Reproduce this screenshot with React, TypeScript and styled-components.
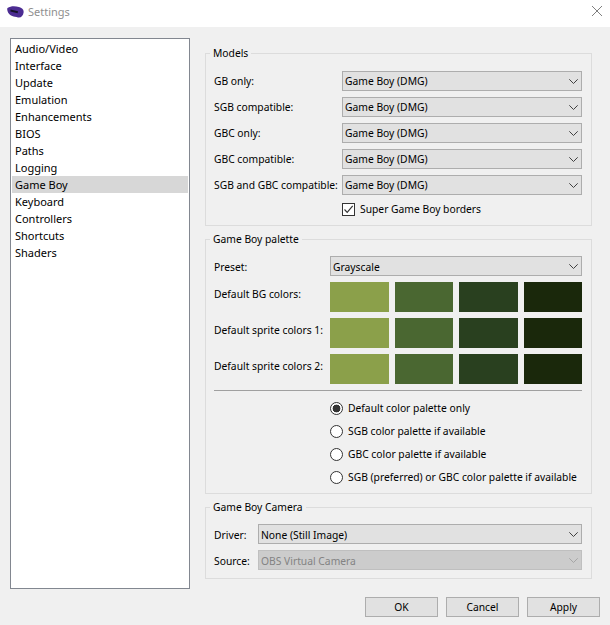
import React from "react";
import styled, { createGlobalStyle } from "styled-components";

const Global = createGlobalStyle`
  html, body { margin: 0; padding: 0; background: #f0f0f0; }
  body { font-family: "Noto Sans", "Open Sans", sans-serif; font-size: 10.3px; color: #000; }
`;

const Window = styled.div`
  width: 610px;
  height: 625px;
  display: flex;
  flex-direction: column;
  overflow: hidden;
  background: #f0f0f0;
`;

const TitleBar = styled.div`
  height: 27px;
  flex: none;
  display: flex;
  align-items: center;
  background: #fff;
  padding: 0 8px 0 7px;
  gap: 4px;
`;

const TitleText = styled.span`
  flex: 1;
  color: #8f8f8f;
  font-size: 11px;
  line-height: 24px;
  align-self: flex-start;
`;

const Body = styled.div`
  flex: none;
  display: flex;
  gap: 15px;
  padding: 11px 18px 0 10px;
`;

const List = styled.ul`
  list-style: none;
  margin: 0;
  box-sizing: border-box;
  width: 180px;
  height: 551px;
  padding: 1px;
  border: 1px solid #828790;
  background: #fff;
  font-size: 11px;
`;

const ListItem = styled.li<{ $selected?: boolean }>`
  height: 17px;
  line-height: 17px;
  padding-left: 3px;
  background: ${(p) => (p.$selected ? "#d7d7d7" : "transparent")};
`;

const Column = styled.div`
  width: 387px;
  padding-top: 8px;
  display: flex;
  flex-direction: column;
  gap: 6px;
`;

const Group = styled.fieldset<{ $top: number; $bottom: number }>`
  margin: 0;
  min-width: 0;
  box-sizing: border-box;
  border: 1px solid #dcdcdc;
  padding: ${(p) => p.$top}px 9px ${(p) => p.$bottom}px 8px;
`;

const GroupTitle = styled.legend`
  margin-left: -4px;
  padding: 0 3px;
  height: 15px;
  line-height: 15px;
`;

const FormGrid = styled.div<{ $label: number }>`
  display: grid;
  grid-template-columns: ${(p) => p.$label}px 1fr;
  row-gap: 6px;
  align-items: center;
`;

const Label = styled.span<{ $low?: boolean }>`
  white-space: nowrap;
  line-height: ${(p) => (p.$low ? 18 : 20)}px;
  padding-top: ${(p) => (p.$low ? 2 : 0)}px;
`;

const SwatchLabel = styled.span`
  align-self: start;
  white-space: nowrap;
  line-height: 20px;
  margin-top: 2px;
`;

const Select = styled.div<{ $disabled?: boolean; $low?: boolean }>`
  box-sizing: border-box;
  height: 20px;
  display: flex;
  align-items: center;
  justify-content: space-between;
  padding: 0 3px 0 2px;
  border: 1px solid ${(p) => (p.$disabled ? "#bfbfbf" : "#adadad")};
  background: ${(p) => (p.$disabled ? "#cccccc" : "#e1e1e1")};
  color: ${(p) => (p.$disabled ? "#838383" : "#000")};
  line-height: 18px;
  > span {
    padding-top: ${(p) => (p.$low ? 2 : 0)}px;
    line-height: ${(p) => (p.$low ? 16 : 18)}px;
  }
`;

const CheckRow = styled.label`
  grid-column: 2;
  height: 16px;
  display: flex;
  align-items: center;
  gap: 5px;
`;

const CheckBox = styled.span`
  width: 13px;
  height: 13px;
  box-sizing: border-box;
  border: 1px solid #333;
  background: #fff;
  display: flex;
`;

const Swatches = styled.div`
  display: grid;
  grid-template-columns: repeat(4, 1fr);
  column-gap: 6px;
`;

const Swatch = styled.div<{ $color: string }>`
  height: 30px;
  background: ${(p) => p.$color};
`;

const Divider = styled.hr`
  margin: 6px 0 0;
  border: 0;
  height: 1px;
  background: #a0a0a0;
`;

const RadioList = styled.div`
  margin: 8px 0 0 116px;
  display: flex;
  flex-direction: column;
  gap: 5px;
`;

const RadioRow = styled.label`
  height: 18px;
  display: flex;
  align-items: center;
  gap: 5px;
  white-space: nowrap;
`;

const RadioDot = styled.span<{ $on?: boolean }>`
  width: 13px;
  height: 13px;
  box-sizing: border-box;
  flex: none;
  border: 1px solid #333;
  border-radius: 50%;
  background: ${(p) => (p.$on ? "radial-gradient(circle, #333 0 3.6px, #fff 4.2px)" : "#fff")};
`;

const ButtonBar = styled.div`
  flex: none;
  display: flex;
  justify-content: flex-end;
  gap: 8px;
  padding: 8px 10px 0 0;
`;

const Button = styled.button`
  width: 73px;
  height: 20px;
  padding: 0;
  box-sizing: border-box;
  border: 1px solid #adadad;
  background: #e1e1e1;
  font: inherit;
  line-height: 18px;
  color: #000;
`;

const Chevron = ({ color = "#404040" }: { color?: string }) => (
  <svg width="9" height="5" viewBox="0 0 9 5" fill="none" stroke={color} strokeWidth="1">
    <path d="M0.3 0.3 L4.5 4.5 L8.7 0.3" />
  </svg>
);

const Combo = ({ text, disabled, low }: { text: string; disabled?: boolean; low?: boolean }) => (
  <Select $disabled={disabled} $low={low}>
    <span>{text}</span>
    <Chevron color={disabled ? "#a5a5a5" : "#404040"} />
  </Select>
);

const AppIcon = () => (
  <svg width="17" height="12" viewBox="0 0 17 12" style={{ flex: "none", marginBottom: 3 }}>
    <path d="M0.5 2 C4 -0.3 8 0 12 1 C15 1.8 17 3.5 16.6 6.5 C16.2 9.8 14 12 11 11.4 C7 10.6 3 10 1.2 6.8 C0.4 5 -0.2 3.2 0.5 2Z" fill="#4c2c92" />
    <path d="M3.5 3.6 L11 5.2 L10.6 7.2 L3.4 5.6Z" fill="#15122a" />
  </svg>
);

const Close = () => (
  <svg width="10" height="10" viewBox="0 0 10 10" stroke="#7f7f7f" strokeWidth="1" style={{ marginTop: -5 }}>
    <path d="M0 0 L10 10 M10 0 L0 10" />
  </svg>
);

const pages = ["Audio/Video", "Interface", "Update", "Emulation", "Enhancements", "BIOS", "Paths", "Logging", "Game Boy", "Keyboard", "Controllers", "Shortcuts", "Shaders"];
const models = ["GB only:", "SGB compatible:", "GBC only:", "GBC compatible:", "SGB and GBC compatible:"];
const palette = ["#8ba04a", "#4a6731", "#29401f", "#1a280b"];
const paletteRows = ["Default BG colors:", "Default sprite colors 1:", "Default sprite colors 2:"];
const radios = ["Default color palette only", "SGB color palette if available", "GBC color palette if available", "SGB (preferred) or GBC color palette if available"];

export default function App() {
  return (
    <Window>
      <Global />
      <TitleBar>
        <AppIcon />
        <TitleText>Settings</TitleText>
        <Close />
      </TitleBar>
      <Body>
        <List>
          {pages.map((p) => (
            <ListItem key={p} $selected={p === "Game Boy"}>{p}</ListItem>
          ))}
        </List>
        <Column>
          <Group $top={10} $bottom={8}>
            <GroupTitle>Models</GroupTitle>
            <FormGrid $label={128}>
              {models.map((m) => (
                <React.Fragment key={m}>
                  <Label>{m}</Label>
                  <Combo text="Game Boy (DMG)" />
                </React.Fragment>
              ))}
              <CheckRow>
                <CheckBox>
                  <svg width="11" height="11" viewBox="0 0 11 11" fill="none" stroke="#333" strokeWidth="1.2">
                    <path d="M1.5 5.5 L4.2 8.3 L9.7 1.8" />
                  </svg>
                </CheckBox>
                Super Game Boy borders
              </CheckRow>
            </FormGrid>
          </Group>
          <Group $top={9} $bottom={7}>
            <GroupTitle>Game Boy palette</GroupTitle>
            <FormGrid $label={116}>
              <Label $low>Preset:</Label>
              <Combo text="Grayscale" low />
              {paletteRows.map((r) => (
                <React.Fragment key={r}>
                  <SwatchLabel>{r}</SwatchLabel>
                  <Swatches>
                    {palette.map((c) => (
                      <Swatch key={c} $color={c} />
                    ))}
                  </Swatches>
                </React.Fragment>
              ))}
            </FormGrid>
            <Divider />
            <RadioList>
              {radios.map((r, i) => (
                <RadioRow key={r}>
                  <RadioDot $on={i === 0} />
                  {r}
                </RadioRow>
              ))}
            </RadioList>
          </Group>
          <Group $top={9} $bottom={8}>
            <GroupTitle>Game Boy Camera</GroupTitle>
            <FormGrid $label={44}>
              <Label $low>Driver:</Label>
              <Combo text="None (Still Image)" low />
              <Label $low>Source:</Label>
              <Combo text="OBS Virtual Camera" disabled low />
            </FormGrid>
          </Group>
        </Column>
      </Body>
      <ButtonBar>
        <Button>OK</Button>
        <Button>Cancel</Button>
        <Button>Apply</Button>
      </ButtonBar>
    </Window>
  );
}
